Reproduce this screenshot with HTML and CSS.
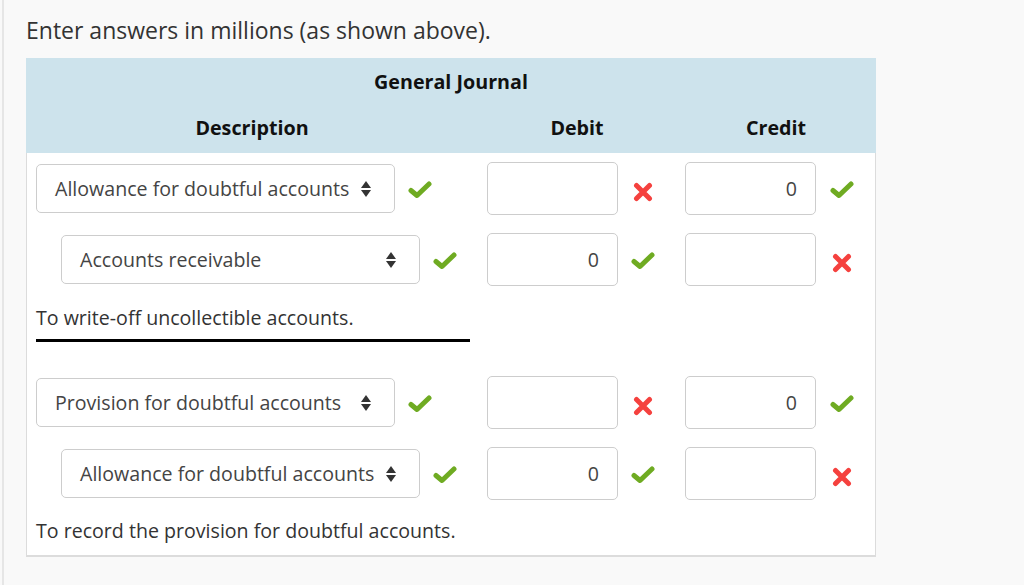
FILE: index.html
```html
<!DOCTYPE html>
<html>
<head>
<meta charset="utf-8">
<link rel="stylesheet" href="styles.css">
</head>
<body>
<div class="page">
  <div class="wrap">
    <p class="title">Enter answers in millions (as shown above).</p>
    <div class="journal">
      <div class="head">
        <div class="head-title">General Journal</div>
        <div class="head-cols">
          <div>Description</div>
          <div>Debit</div>
          <div>Credit</div>
        </div>
      </div>
      <div class="body">
        <div class="row">
          <div class="desc">
            <div class="select"><span>Allowance for doubtful accounts</span><span class="arrows"></span></div>
            <span class="icon ok"></span>
          </div>
          <div class="amt"><div class="field"></div><span class="icon bad"></span></div>
          <div class="amt cr"><div class="field">0</div><span class="icon ok"></span></div>
        </div>
        <div class="row gap">
          <div class="desc indent">
            <div class="select"><span>Accounts receivable</span><span class="arrows"></span></div>
            <span class="icon ok"></span>
          </div>
          <div class="amt"><div class="field">0</div><span class="icon ok"></span></div>
          <div class="amt cr"><div class="field"></div><span class="icon bad"></span></div>
        </div>
        <p class="memo first">To write-off uncollectible accounts.</p>
        <div class="rule"></div>
        <div class="row sep">
          <div class="desc">
            <div class="select"><span>Provision for doubtful accounts</span><span class="arrows"></span></div>
            <span class="icon ok"></span>
          </div>
          <div class="amt"><div class="field"></div><span class="icon bad"></span></div>
          <div class="amt cr"><div class="field">0</div><span class="icon ok"></span></div>
        </div>
        <div class="row gap">
          <div class="desc indent">
            <div class="select"><span>Allowance for doubtful accounts</span><span class="arrows"></span></div>
            <span class="icon ok"></span>
          </div>
          <div class="amt"><div class="field">0</div><span class="icon ok"></span></div>
          <div class="amt cr"><div class="field"></div><span class="icon bad"></span></div>
        </div>
        <p class="memo last">To record the provision for doubtful accounts.</p>
      </div>
    </div>
  </div>
</div>
</body>
</html>
```

FILE: styles.css
```css
* { box-sizing: border-box; }
html, body { margin: 0; padding: 0; }
body {
  font-family: "Open Sans", "DejaVu Sans", sans-serif;
  background: #f9f9f9;
  color: #333;
}
.page {
  width: 1024px;
  height: 585px;
  overflow: hidden;
}
.wrap {
  margin-left: 2px;
  border-left: 2px solid #e6e6e6;
  padding-left: 22px;
  padding-top: 15px;
  height: 585px;
}
.title {
  margin: 0;
  font-size: 23px;
  line-height: 30px;
  color: #333;
}
.journal {
  margin-top: 13px;
  width: 850px;
}
.head {
  background: #cde3ec;
  height: 95px;
  padding-top: 10px;
  font-weight: 700;
  font-size: 19.7px;
  color: #111;
}
.head-title {
  text-align: center;
  line-height: 28px;
}
.head-cols {
  display: grid;
  grid-template-columns: 452px 198px 200px;
  margin-top: 18px;
  line-height: 28px;
  text-align: center;
}
.body {
  background: #fff;
  border: 1px solid #dcdcdc;
  border-top: none;
  border-bottom-width: 2px;
  padding: 9px 0 12px 0;
}
.row {
  display: grid;
  grid-template-columns: 451px 198px 199px;
  height: 53px;
}
.row.gap { margin-top: 18px; }
.row.sep { margin-top: 34px; }
.desc, .amt {
  display: flex;
  align-items: center;
}
.desc { padding-left: 9px; }
.desc.indent { padding-left: 34px; }
.amt { padding-left: 9px; }
.select {
  width: 359px;
  height: 49px;
  border: 1px solid #cdcdcd;
  border-radius: 5px;
  background: #fff;
  display: flex;
  align-items: center;
  justify-content: space-between;
  padding: 0 22px 0 18px;
  font-size: 19.6px;
  color: #444;
}
.arrows {
  display: flex;
  flex-direction: column;
  gap: 2px;
  width: 11px;
  flex: none;
}
.arrows::before, .arrows::after {
  content: "";
  display: block;
  width: 0;
  height: 0;
  border-left: 5.5px solid transparent;
  border-right: 5.5px solid transparent;
}
.arrows::before { border-bottom: 7px solid #333; }
.arrows::after { border-top: 7px solid #333; }
.field {
  width: 131px;
  height: 53px;
  border: 1px solid #cdcdcd;
  border-radius: 5px;
  background: #fff;
  text-align: right;
  padding-right: 18px;
  line-height: 51px;
  font-size: 19.6px;
  color: #444;
}
.icon {
  width: 26px;
  height: 20px;
  margin-left: 12px;
  display: block;
  background-repeat: no-repeat;
  background-position: center;
}
.amt.cr .icon { margin-left: 13px; }
.desc .icon { margin-left: 12px; }
.icon.ok {
  background-image: url("data:image/svg+xml;utf8,<svg xmlns='http://www.w3.org/2000/svg' width='24' height='18' viewBox='0 0 24 18'><path d='M3 9.5 L9 14.5 L21 3' fill='none' stroke='%236fab22' stroke-width='5' stroke-linecap='round' stroke-linejoin='round'/></svg>");
  margin-top: 2px;
}
.icon.bad {
  background-image: url("data:image/svg+xml;utf8,<svg xmlns='http://www.w3.org/2000/svg' width='20' height='20' viewBox='0 0 20 20'><path d='M3.5 3.5 L16.5 16.5 M16.5 3.5 L3.5 16.5' fill='none' stroke='%23f5413e' stroke-width='5' stroke-linecap='round'/></svg>");
  margin-top: 6px;
}
.memo {
  margin: 0;
  padding-left: 9px;
  font-size: 19.6px;
  line-height: 24px;
  color: #333;
}
.memo.first { margin-top: 20px; }
.memo.last { margin-top: 19px; }
.rule {
  margin: 9px 0 0 9px;
  width: 434px;
  height: 3px;
  background: #000;
}
```
